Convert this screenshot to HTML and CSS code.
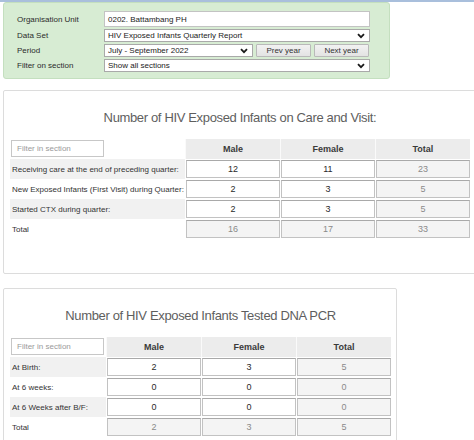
FILE: index.html
```html
<!DOCTYPE html>
<html>
<head>
<meta charset="utf-8">
<link rel="stylesheet" href="styles.css">
</head>
<body>
<div class="topbar"></div>
<div class="page">
  <div class="criteria">
    <div class="crit-row">
      <span class="crit-label">Organisation Unit</span>
      <div class="field field-text">0202. Battambang PH</div>
    </div>
    <div class="crit-row">
      <span class="crit-label">Data Set</span>
      <div class="field field-select"><span>HIV Exposed Infants Quarterly Report</span><svg class="chev" width="8" height="6" viewBox="0 0 8 6"><path d="M1 1.2l3 3 3-3" stroke="#1a1a1a" stroke-width="1.8" fill="none"/></svg></div>
    </div>
    <div class="crit-row">
      <span class="crit-label">Period</span>
      <div class="period-group">
        <div class="field field-select period-select"><span>July - September 2022</span><svg class="chev" width="8" height="6" viewBox="0 0 8 6"><path d="M1 1.2l3 3 3-3" stroke="#1a1a1a" stroke-width="1.8" fill="none"/></svg></div>
        <button class="btn">Prev year</button>
        <button class="btn">Next year</button>
      </div>
    </div>
    <div class="crit-row">
      <span class="crit-label">Filter on section</span>
      <div class="field field-select"><span>Show all sections</span><svg class="chev" width="8" height="6" viewBox="0 0 8 6"><path d="M1 1.2l3 3 3-3" stroke="#1a1a1a" stroke-width="1.8" fill="none"/></svg></div>
    </div>
  </div>

  <section class="card card-first">
    <h2 class="card-title">Number of HIV Exposed Infants on Care and Visit:</h2>
    <table class="form-table">
      <thead>
        <tr>
          <th class="filter-cell"><div class="filter-input">Filter in section</div></th>
          <th class="col-head">Male</th>
          <th class="col-head">Female</th>
          <th class="col-head">Total</th>
        </tr>
      </thead>
      <tbody>
        <tr class="odd">
          <td class="row-label">Receiving care at the end of preceding quarter:</td>
          <td class="data"><div class="val">12</div></td>
          <td class="data"><div class="val">11</div></td>
          <td class="data"><div class="val val-total">23</div></td>
        </tr>
        <tr>
          <td class="row-label">New Exposed Infants (First Visit) during Quarter:</td>
          <td class="data"><div class="val">2</div></td>
          <td class="data"><div class="val">3</div></td>
          <td class="data"><div class="val val-total">5</div></td>
        </tr>
        <tr class="odd">
          <td class="row-label">Started CTX during quarter:</td>
          <td class="data"><div class="val">2</div></td>
          <td class="data"><div class="val">3</div></td>
          <td class="data"><div class="val val-total">5</div></td>
        </tr>
        <tr>
          <td class="row-label">Total</td>
          <td class="data"><div class="val val-total">16</div></td>
          <td class="data"><div class="val val-total">17</div></td>
          <td class="data"><div class="val val-total">33</div></td>
        </tr>
      </tbody>
    </table>
  </section>

  <section class="card card-second">
    <h2 class="card-title">Number of HIV Exposed Infants Tested DNA PCR</h2>
    <table class="form-table">
      <thead>
        <tr>
          <th class="filter-cell"><div class="filter-input">Filter in section</div></th>
          <th class="col-head">Male</th>
          <th class="col-head">Female</th>
          <th class="col-head">Total</th>
        </tr>
      </thead>
      <tbody>
        <tr class="odd">
          <td class="row-label">At Birth:</td>
          <td class="data"><div class="val">2</div></td>
          <td class="data"><div class="val">3</div></td>
          <td class="data"><div class="val val-total">5</div></td>
        </tr>
        <tr>
          <td class="row-label">At 6 weeks:</td>
          <td class="data"><div class="val">0</div></td>
          <td class="data"><div class="val">0</div></td>
          <td class="data"><div class="val val-total">0</div></td>
        </tr>
        <tr class="odd">
          <td class="row-label">At 6 Weeks after B/F:</td>
          <td class="data"><div class="val">0</div></td>
          <td class="data"><div class="val">0</div></td>
          <td class="data"><div class="val val-total">0</div></td>
        </tr>
        <tr>
          <td class="row-label">Total</td>
          <td class="data"><div class="val val-total">2</div></td>
          <td class="data"><div class="val val-total">3</div></td>
          <td class="data"><div class="val val-total">5</div></td>
        </tr>
      </tbody>
    </table>
  </section>
</div>
</body>
</html>
```

FILE: styles.css
```css
html, body {
  margin: 0;
  padding: 0;
  background: #ffffff;
}
body {
  font-family: "Liberation Sans", Arial, sans-serif;
  color: #333333;
  overflow: hidden;
}
.topbar {
  height: 2px;
  background: #a9bfdc;
}
.page {
  padding: 0 3px;
}

/* criteria box */
.criteria {
  box-sizing: border-box;
  width: 387px;
  background: #d7ecd3;
  border: 1px solid #c4dfbf;
  border-radius: 3px;
  padding: 8px 19px 6px 13px;
  display: flex;
  flex-direction: column;
  gap: 2px;
}
.crit-row {
  display: flex;
  align-items: center;
  height: 13px;
}
.crit-row:first-child {
  height: 16px;
}
.crit-label {
  width: 87px;
  flex: none;
  font-size: 8px;
  color: #2b2b2b;
}
.field {
  box-sizing: border-box;
  height: 13px;
  width: 266px;
  background: #ffffff;
  border: 1px solid #a9a9a9;
  font-size: 8px;
  color: #222;
  display: flex;
  align-items: center;
  padding: 0 4px 0 3px;
}
.field-text {
  height: 16px;
  border-color: #c3c3c3;
}
.field-select span {
  flex: 1;
  white-space: nowrap;
}
.chev {
  flex: none;
}
.period-group {
  display: flex;
  gap: 3px;
}
.period-select {
  width: 149px;
}
.btn {
  box-sizing: border-box;
  width: 55px;
  height: 13px;
  padding: 0;
  margin: 0;
  font-family: "Liberation Sans", Arial, sans-serif;
  font-size: 8px;
  color: #333;
  background: linear-gradient(#f2f2f2, #e3e3e3);
  border: 1px solid #b9b9b9;
  border-radius: 1px;
}

/* cards */
.card {
  width: fit-content;
  box-sizing: border-box;
  border: 1px solid #dcdcdc;
  border-radius: 2px;
  padding: 0 5px 34px 6px;
  background: #fff;
}
.card-first {
  margin-top: 11px;
}
.card-second {
  margin-top: 14px;
}
.card-title {
  margin: 0;
  padding: 18px 0 12px;
  line-height: 18px;
  font-size: 13px;
  letter-spacing: -0.35px;
  font-weight: normal;
  color: #5e5e5e;
  text-align: center;
}
.form-table {
  border-collapse: separate;
  border-spacing: 0;
}
.filter-cell {
  padding: 1px 2px 2px 1px;
  text-align: left;
  background: #fff;
}
.filter-input {
  box-sizing: border-box;
  width: 93px;
  height: 17px;
  border: 1px solid #c7c7c7;
  font-size: 8px;
  font-weight: normal;
  color: #9a9a9a;
  padding: 0 5px;
  display: flex;
  align-items: center;
}
.col-head {
  width: 94px;
  height: 20px;
  padding: 0;
  background: #ececec;
  border-left: 1px solid #fafafa;
  font-size: 9px;
  font-weight: bold;
  color: #3a3a3a;
  text-align: center;
}
.row-label {
  height: 20px;
  padding: 0 1px 0 2px;
  white-space: nowrap;
  font-size: 8px;
  color: #333;
}
.odd .row-label {
  background: #f1f1f1;
}
.data {
  padding: 1px 0 1px 1px;
}
.val {
  box-sizing: border-box;
  height: 18px;
  width: 94px;
  border: 1px solid #c2c2c2;
  border-top-color: #a9a9a9;
  background: #fff;
  font-size: 9px;
  color: #2a2a2a;
  display: flex;
  align-items: center;
  justify-content: center;
}
.val-total {
  background: #f4f4f4;
  color: #8a8a8a;
}
```
